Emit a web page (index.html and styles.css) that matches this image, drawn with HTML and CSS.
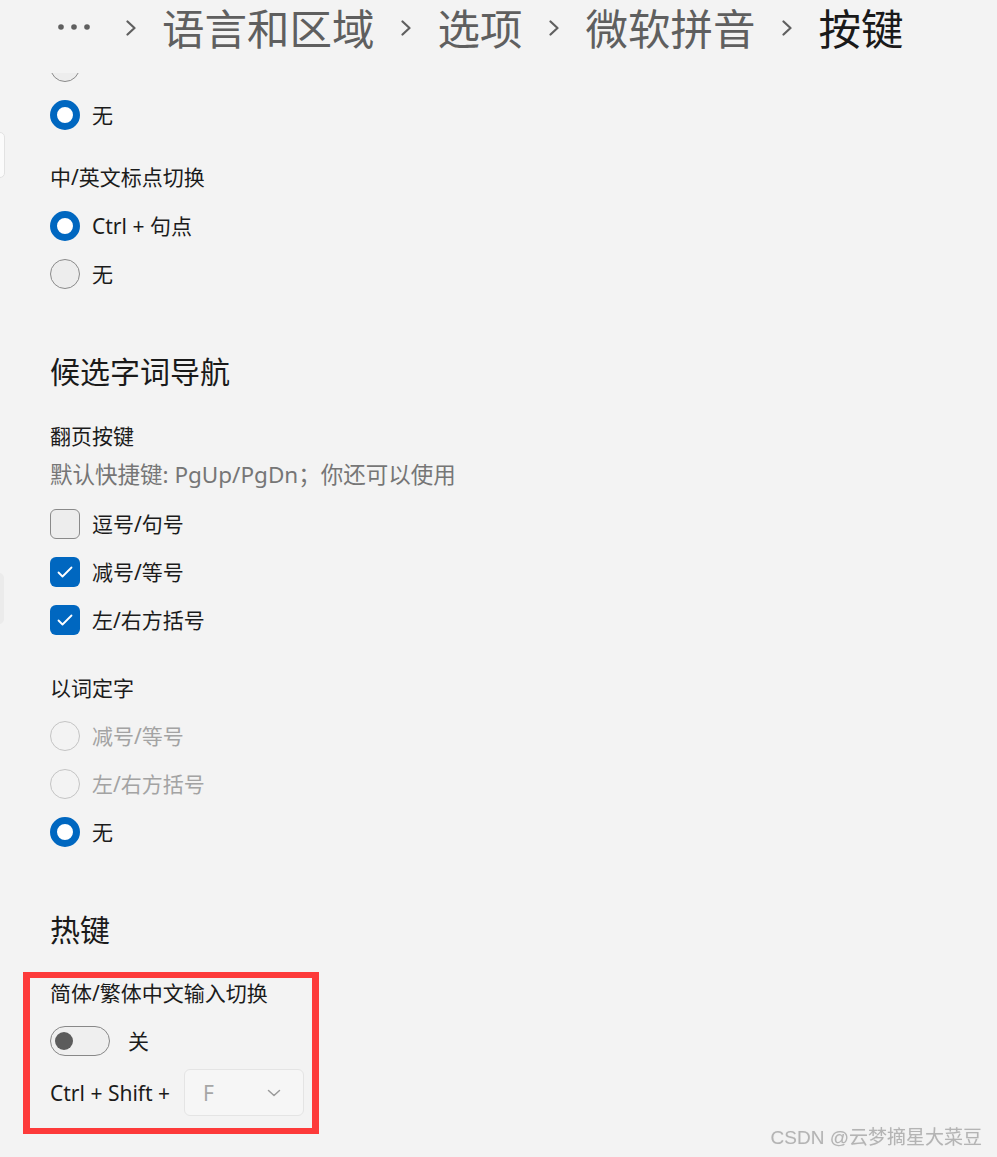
FILE: index.html
```html
<!DOCTYPE html>
<html lang="zh-CN">
<head>
<meta charset="utf-8">
<title>按键</title>
<link rel="stylesheet" href="styles.css">
</head>
<body>
<header class="topbar">
  <nav class="crumbs">
    <svg class="more" width="32" height="8" viewBox="0 0 32 8"><circle cx="3" cy="4" r="2.8"/><circle cx="16" cy="4" r="2.8"/><circle cx="29" cy="4" r="2.8"/></svg>
    <svg class="chev" width="10" height="16" viewBox="0 0 10 16"><polyline points="1.5,1.5 8.5,8 1.5,14.5"/></svg>
    <span class="crumb">语言和区域</span>
    <svg class="chev" width="10" height="16" viewBox="0 0 10 16"><polyline points="1.5,1.5 8.5,8 1.5,14.5"/></svg>
    <span class="crumb">选项</span>
    <svg class="chev" width="10" height="16" viewBox="0 0 10 16"><polyline points="1.5,1.5 8.5,8 1.5,14.5"/></svg>
    <span class="crumb">微软拼音</span>
    <svg class="chev" width="10" height="16" viewBox="0 0 10 16"><polyline points="1.5,1.5 8.5,8 1.5,14.5"/></svg>
    <span class="crumb current">按键</span>
  </nav>
</header>

<div class="page">
  <aside class="edge">
    <div class="edge-piece light"></div>
    <div class="edge-piece grey"></div>
  </aside>

  <main class="content">
    <div class="row"><span class="radio"></span></div>
    <div class="row"><span class="radio on"></span><span class="label">无</span></div>

    <div class="caption first">中/英文标点切换</div>
    <div class="row"><span class="radio on"></span><span class="label">Ctrl + 句点</span></div>
    <div class="row"><span class="radio"></span><span class="label">无</span></div>

    <h2 class="section">候选字词导航</h2>
    <div class="caption">翻页按键</div>
    <div class="hint">默认快捷键: PgUp/PgDn；你还可以使用</div>
    <div class="row"><span class="check"></span><span class="label">逗号/句号</span></div>
    <div class="row"><span class="check on"><svg width="30" height="30" viewBox="0 0 30 30"><polyline points="8.5,15.5 12.5,19.5 21.5,10.5"/></svg></span><span class="label">减号/等号</span></div>
    <div class="row"><span class="check on"><svg width="30" height="30" viewBox="0 0 30 30"><polyline points="8.5,15.5 12.5,19.5 21.5,10.5"/></svg></span><span class="label">左/右方括号</span></div>

    <div class="caption">以词定字</div>
    <div class="row disabled"><span class="radio"></span><span class="label">减号/等号</span></div>
    <div class="row disabled"><span class="radio"></span><span class="label">左/右方括号</span></div>
    <div class="row"><span class="radio on"></span><span class="label">无</span></div>

    <h2 class="section">热键</h2>
    <div class="marked">
      <div class="caption tight">简体/繁体中文输入切换</div>
      <div class="row toggle-row"><span class="toggle"><span class="knob"></span></span><span class="label">关</span></div>
      <div class="combo-row">
        <span class="label plain">Ctrl + Shift +</span>
        <span class="combo"><span class="combo-value">F</span><svg width="14" height="8" viewBox="0 0 14 8"><polyline points="1.5,1.5 7,6.5 12.5,1.5"/></svg></span>
      </div>
    </div>
  </main>
</div>

<div class="watermark">CSDN @云梦摘星大菜豆</div>
</body>
</html>
```

FILE: styles.css
```css
html, body {
  margin: 0;
  padding: 0;
}

body {
  background: #f3f3f3;
  color: #1b1b1b;
  font-family: "Noto Sans", "Noto Sans CJK SC", sans-serif;
  font-size: 21px;
  overflow: hidden;
  height: 1157px;
}

.topbar {
  position: fixed;
  top: 0;
  left: 0;
  right: 0;
  height: 73px;
  background: #f3f3f3;
  z-index: 2;
}

.crumbs {
  display: flex;
  align-items: center;
  height: 58px;
  padding-left: 58px;
  gap: 26.5px;
}

.more {
  fill: #5f5f5f;
  margin-right: 9px;
  margin-top: -4px;
}

.chev {
  fill: none;
  stroke: #5f5f5f;
  stroke-width: 2.2;
  stroke-linecap: round;
  stroke-linejoin: round;
  margin-top: -2px;
}

.crumb {
  font-family: "Noto Sans", "Noto Sans CJK SC", sans-serif;
  font-size: 42.5px;
  line-height: 58px;
  color: #5f5f5f;
  white-space: nowrap;
}

.crumb.current {
  color: #1a1a1a;
}

.page {
  display: flex;
}

.edge {
  width: 5px;
  flex-shrink: 0;
  overflow: hidden;
}

.edge-piece {
  margin-left: -6px;
  border-radius: 0 5px 5px 0;
}

.edge-piece.light {
  margin-top: 132px;
  height: 44px;
  width: 9px;
  background: #fbfbfb;
  border: 1px solid #e2e2e2;
}

.edge-piece.grey {
  margin-top: 395px;
  height: 51px;
  width: 10px;
  background: #ebebeb;
}

.content {
  padding-left: 45px;
  padding-top: 43px;
  flex: 1;
}

.row {
  display: flex;
  align-items: center;
  height: 48px;
  gap: 12px;
}

.label {
  line-height: 30px;
  white-space: nowrap;
}

.radio {
  box-sizing: border-box;
  width: 30px;
  height: 30px;
  border-radius: 50%;
  border: 1.5px solid #8a8a8a;
  background: #ededed;
  flex-shrink: 0;
}

.radio.on {
  border: 7px solid #0067c0;
  background: #ffffff;
}

.disabled .radio {
  border-color: #c4c4c4;
  background: transparent;
}

.disabled .label {
  color: #a3a3a3;
}

.check {
  box-sizing: border-box;
  width: 30px;
  height: 30px;
  border-radius: 6px;
  border: 1.5px solid #8a8a8a;
  background: #ededed;
  flex-shrink: 0;
  display: flex;
}

.check.on {
  border: none;
  background: #0067c0;
}

.check svg {
  fill: none;
  stroke: #ffffff;
  stroke-width: 1.8;
  stroke-linecap: round;
  stroke-linejoin: round;
}

.caption {
  line-height: 30px;
  margin-top: 29px;
}

.caption.first {
  margin-top: 23px;
  margin-bottom: 10px;
}

.caption.tight {
  margin-top: 0;
}

.section {
  margin: 52px 0 0 0;
  padding-bottom: 2px;
  font-family: "Noto Sans CJK SC", sans-serif;
  font-size: 30px;
  font-weight: 400;
  line-height: 40px;
  color: #1a1a1a;
}

.hint {
  font-size: 22.5px;
  line-height: 30px;
  margin-top: 9px;
  margin-bottom: 10px;
  color: #767676;
  white-space: nowrap;
}

.caption + .row {
  margin-top: 9px;
}

.caption.first + .row {
  margin-top: 0;
}

.hint + .row {
  margin-top: 0;
}

.marked {
  box-sizing: border-box;
  width: 296px;
  margin-top: 22px;
  margin-left: -27px;
  border: 6px solid #fd3a3a;
  border-left-width: 7px;
  border-right-width: 7px;
  padding: 0 0 12px 20px;
}

.toggle-row {
  margin-top: 11px;
  gap: 18px;
}

.toggle {
  box-sizing: border-box;
  width: 60px;
  height: 30px;
  border-radius: 15px;
  border: 1.5px solid #888888;
  background: #efefef;
  display: flex;
  align-items: center;
  padding-left: 3.5px;
}

.knob {
  width: 18px;
  height: 18px;
  border-radius: 50%;
  background: #5c5c5c;
}

.combo-row {
  display: flex;
  align-items: center;
  gap: 14px;
  margin-top: 4px;
}

.combo {
  box-sizing: border-box;
  width: 120px;
  height: 47px;
  border: 1.5px solid #e4e4e4;
  border-radius: 6px;
  background: #f6f6f6;
  display: flex;
  align-items: center;
  justify-content: space-between;
  padding: 0 22px 0 18px;
}

.combo-value {
  color: #a6a6a6;
}

.combo svg {
  fill: none;
  stroke: #9a9a9a;
  stroke-width: 1.5;
  stroke-linecap: round;
  stroke-linejoin: round;
}

.watermark {
  position: fixed;
  right: 15px;
  bottom: 7px;
  font-family: "Liberation Sans", "Noto Sans CJK SC", sans-serif;
  font-size: 19px;
  line-height: 24px;
  color: #b4b4b4;
  text-shadow: 0 0 1px #e0e0e0;
  z-index: 3;
}
```
